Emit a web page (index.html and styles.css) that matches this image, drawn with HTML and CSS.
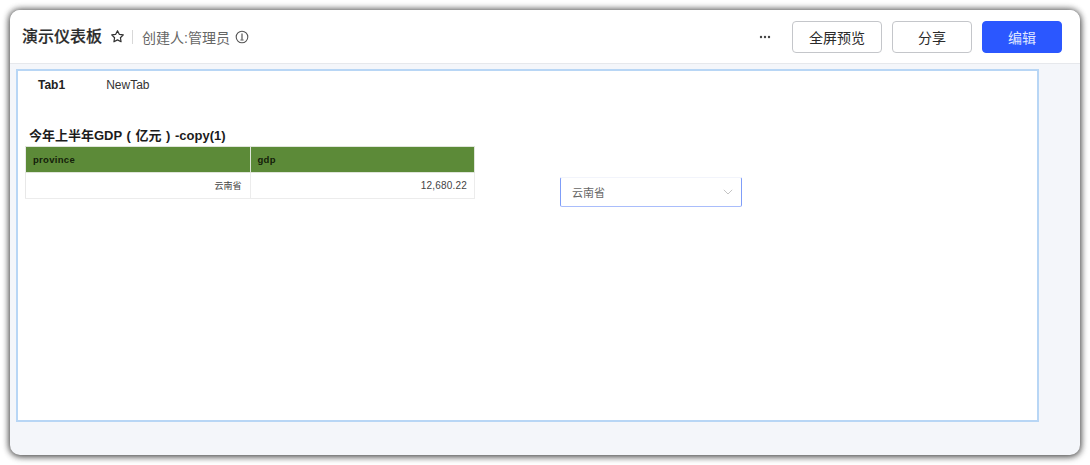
FILE: index.html
```html
<!DOCTYPE html>
<html lang="zh">
<head>
<meta charset="utf-8">
<title>演示仪表板</title>
<link rel="stylesheet" href="styles.css">
</head>
<body>
<div class="window">
  <header class="topbar">
    <h1 class="title">演示仪表板</h1>
    <svg class="star" viewBox="0 0 16 16" width="15" height="15"><path d="M8 1.8l1.9 3.9 4.3.6-3.1 3 .7 4.3L8 11.6l-3.8 2 .7-4.3-3.1-3 4.3-.6z" fill="none" stroke="#333" stroke-width="1.3" stroke-linejoin="round"/></svg>
    <span class="sep"></span>
    <span class="creator">创建人:管理员</span>
    <svg class="info" viewBox="0 0 14 14" width="14" height="14"><circle cx="7" cy="7" r="5.8" fill="none" stroke="#555" stroke-width="1.1"/><path d="M7 3.4v6.4" stroke="#555" stroke-width="1.2"/><path d="M5.4 10h3.2" stroke="#555" stroke-width="1"/></svg>
    <span class="spacer"></span>
    <svg class="more" viewBox="0 0 12 4" width="12" height="4"><circle cx="2" cy="2" r="1.2" fill="#444"/><circle cx="6" cy="2" r="1.2" fill="#444"/><circle cx="10" cy="2" r="1.2" fill="#444"/></svg>
    <button class="btn btn-wide">全屏预览</button>
    <button class="btn btn-mid">分享</button>
    <button class="btn btn-primary">编辑</button>
  </header>
  <main class="content">
    <section class="panel">
      <nav class="tabs">
        <span class="tab tab-active">Tab1</span>
        <span class="tab">NewTab</span>
      </nav>
      <div class="canvas">
        <div class="chart">
          <h2 class="chart-title">今年上半年GDP ( 亿元 ) -copy(1)</h2>
          <table class="grid">
            <thead><tr><th>province</th><th>gdp</th></tr></thead>
            <tbody><tr><td class="cell-text">云南省</td><td class="cell-num">12,680.22</td></tr></tbody>
          </table>
        </div>
        <div class="select">
          <span>云南省</span>
          <svg viewBox="0 0 10 6" width="10" height="6"><path d="M.8.8L5 5l4.2-4.2" fill="none" stroke="#c4c4c4" stroke-width="1"/></svg>
        </div>
      </div>
    </section>
  </main>
</div>
</body>
</html>
```

FILE: styles.css
```css
* { box-sizing: border-box; }
html, body { margin: 0; height: 100%; background: #fff; overflow: hidden; }
body {
  padding: 10px;
  font-family: "Liberation Sans", "Noto Sans CJK SC", sans-serif;
  color: #222;
}
.window {
  width: 1070px;
  height: 445px;
  border-radius: 10px;
  overflow: hidden;
  background: #f4f6fa;
  box-shadow: -1px 0 7px rgba(0,0,0,.45), 0 -1px 7px rgba(0,0,0,.25), 1px 2px 7px rgba(0,0,0,.45);
  display: flex;
  flex-direction: column;
}
.topbar {
  height: 54px;
  flex: none;
  background: #fff;
  border-bottom: 1px solid #e6e8ec;
  display: flex;
  align-items: center;
  padding: 0 18px 0 12px;
}
.title {
  margin: 0;
  font-size: 16px;
  font-weight: 500;
  color: #2b2b2b;
  -webkit-text-stroke: .2px #2b2b2b;
  line-height: 22px;
}
.star { margin-left: 8px; }
.sep { width: 1px; height: 14px; background: #d8d8d8; margin: 0 9px 0 7px; }
.creator { font-size: 14px; color: #666; }
.info { margin-left: 5px; }
.spacer { flex: 1; }
.more { margin-right: 21px; }
.btn {
  height: 32px;
  border: 1px solid #c4c6ca;
  border-radius: 4px;
  background: #fff;
  font-family: inherit;
  font-size: 14px;
  color: #2b2b2b;
  padding: 0;
  margin-left: 10px;
}
.btn-wide { width: 90px; margin-left: 0; }
.btn-mid { width: 80px; }
.btn-primary { width: 80px; background: #2b57ff; border-color: #2b57ff; color: #dfe6ff; }
.content { flex: 1; padding: 5px 0 0 6px; }
.panel {
  width: 1023px;
  height: 353px;
  background: #fff;
  border: 2px solid #b8d6f5;
}
.tabs { display: flex; gap: 41px; padding: 6px 0 0 20px; height: 57px; }
.tab { font-size: 12px; line-height: 16px; color: #333; }
.tab-active { font-weight: 700; color: #222; }
.canvas { display: flex; align-items: flex-start; padding-left: 7px; }
.chart { width: 450px; }
.chart-title {
  margin: 0 0 2px 4px;
  font-size: 13px;
  font-weight: 700;
  word-spacing: 1px;
  line-height: 16px;
  color: #1c1c1c;
}
.grid { width: 450px; border-collapse: collapse; table-layout: fixed; border: 1px solid #e8e8e8; border-top: 0; }
.grid th {
  height: 26px;
  background: #5c8a38;
  border: 1px solid #dfe5da;
  border-width: 1px 1px 1px 0;
  font-size: 9.5px;
  font-weight: 700;
  letter-spacing: .3px;
  color: #14200a;
  text-align: left;
  padding: 0 7px;
}
.grid td {
  height: 26px;
  border-right: 1px solid #ececec;
  border-bottom: 1px solid #ececec;
  color: #444;
  text-align: right;
}
.grid .cell-text { font-size: 9px; padding: 0 8px; }
.grid .cell-num { font-size: 10px; letter-spacing: .2px; padding: 0 7px; }
.select {
  width: 182px;
  height: 30px;
  margin: 49px 0 0 85px;
  padding: 0 8px 0 11px;
  background: #fff;
  border: 1px solid #a9bdfb;
  border-top-color: #f2f4fb;
  border-left-color: #7f9df8;
  border-right-color: #7f9df8;
  border-radius: 2px;
  display: flex;
  align-items: center;
  justify-content: space-between;
  font-size: 11px;
  color: #666;
}
```
